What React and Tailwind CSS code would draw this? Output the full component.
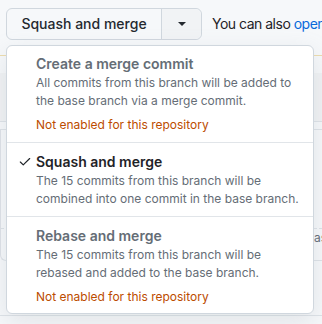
import { Check } from "lucide-react";

const options = [
  {
    title: "Create a merge commit",
    desc: "All commits from this branch will be added to the base branch via a merge commit.",
    disabled: true,
  },
  {
    title: "Squash and merge",
    desc: "The 15 commits from this branch will be combined into one commit in the base branch.",
    selected: true,
  },
  {
    title: "Rebase and merge",
    desc: "The 15 commits from this branch will be rebased and added to the base branch.",
    disabled: true,
  },
];

export default function App() {
  return (
    <div
      className="relative w-[322px] h-[324px] overflow-hidden bg-[#f6f8fa] text-[#1f2328]"
      style={{ fontFamily: "Inter, 'Noto Sans', sans-serif" }}
    >
      {/* merge button row */}
      <div className="flex items-center pt-2 pl-1.5">
        <div className="flex h-8 shrink-0 rounded-md border border-[#d0d7de] bg-[#f6f8fa]">
          <button className="w-[155px] text-sm font-medium text-[#24292f] border-r border-[#d0d7de]">
            Squash and merge
          </button>
          <button className="w-[39px] flex items-center justify-center bg-[#f1f3f5] rounded-r-md">
            <svg width="8" height="4" viewBox="0 0 8 4">
              <path d="M0 0h8L4 4z" fill="#24292f" />
            </svg>
          </button>
        </div>
        <div className="ml-[10px] whitespace-nowrap text-sm tracking-[-0.5px]">
          You can also <span className="text-[#0969da]">open this in GitHub Desktop</span>
        </div>
      </div>

      {/* content behind the menu */}
      <div className="mt-[15px] border-t border-[#ecdcae]">
        <div className="h-[17px]" />
        <div className="h-[49px] bg-[#f0f2f4] border-b border-[#dde2e7]" />
        <div className="mt-[7px] h-[132px] border-t border-[#dde2e7] border-b border-l rounded-bl-md">
          <div className="h-[99px] border-b border-dashed border-[#dde2e7]" />
          <div className="pl-[313px] text-xs text-[#636c76] leading-[18px]">as</div>
        </div>
        <div className="mt-[54px] border-t border-[#dde2e7]" />
      </div>

      {/* dropdown menu */}
      <div className="absolute left-[6px] top-[45px] w-[308px] rounded-md border border-[#d0d7de] bg-white shadow-[0_8px_24px_rgba(140,149,159,0.2)]">
        {options.map((o, i) => (
          <div
            key={o.title}
            className={`relative pl-[29px] pr-2 ${i > 0 ? "pt-[9px] border-t border-[#e1e5e9]" : "pt-2"} ${i === 2 ? "pb-[7px]" : "pb-2"}`}
          >
            {o.selected && (
              <Check
                size={14}
                strokeWidth={2}
                className="absolute left-[11px] top-[12px] text-[#1f2328]"
              />
            )}
            <div
              className={`text-sm font-semibold leading-5 ${o.disabled ? "text-[#656d76]" : "text-[#1f2328]"}`}
            >
              {o.title}
            </div>
            <div className="text-xs leading-[18px] text-[#656d76]">{o.desc}</div>
            {o.disabled && (
              <div className="mt-1.5 text-xs leading-[18px] text-[#bc4c00]">
                Not enabled for this repository
              </div>
            )}
          </div>
        ))}
      </div>
    </div>
  );
}
